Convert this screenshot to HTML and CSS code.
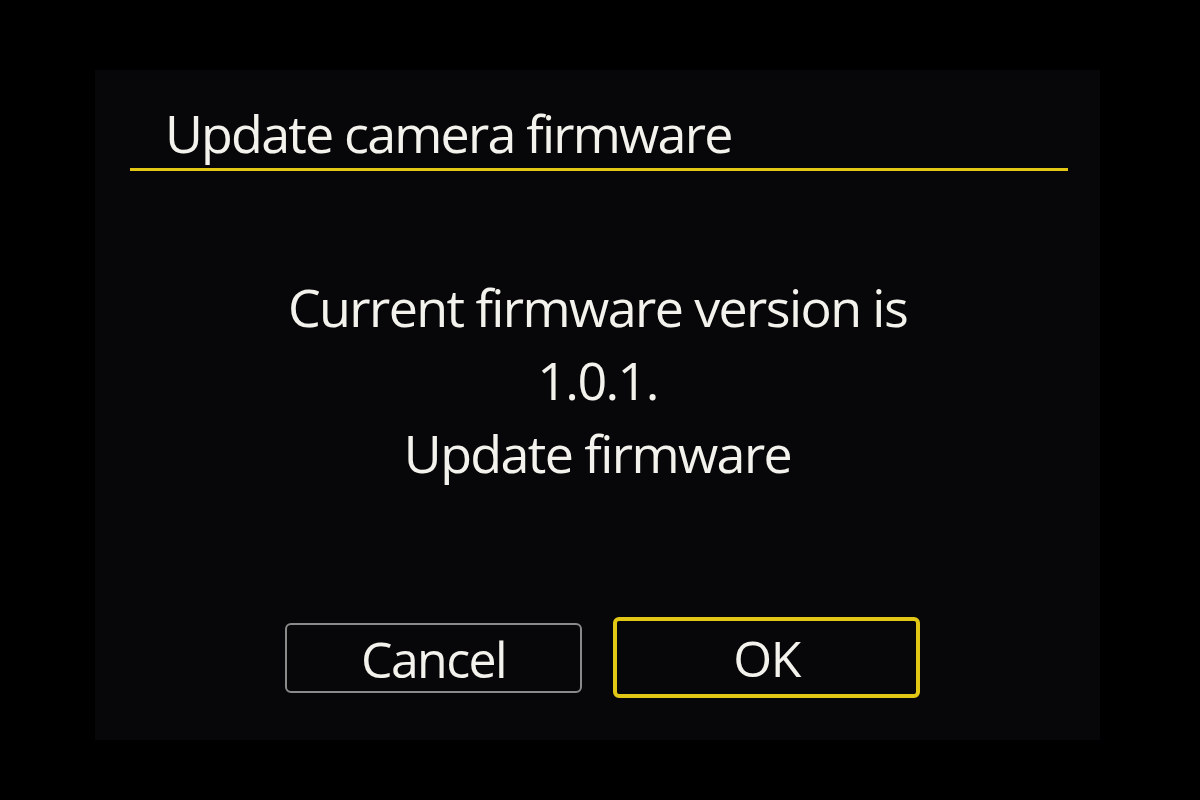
FILE: index.html
```html
<!DOCTYPE html>
<html lang="en">
<head>
    <meta charset="UTF-8">
    <meta name="viewport" content="width=device-width, initial-scale=1.0">
    <title>Update camera firmware</title>
    <link rel="stylesheet" href="styles.css">
</head>
<body>
    <div class="pantalla">
        <div class="cabecera">
            <h1>Update camera firmware</h1>
        </div>

        <div class="mensaje">
            <p>Current firmware version is</p>
            <p>1.0.1.</p>
            <p>Update firmware</p>
        </div>

        <div class="botones">
            <button class="boton boton-cancelar">Cancel</button>
            <button class="boton boton-ok">OK</button>
        </div>
    </div>
</body>
</html>
```

FILE: styles.css
```css
body {
    margin: 0;
    background-color: #000;
    color: #f4f2ec;
    font-family: "Open Sans", "DejaVu Sans", sans-serif;
    padding: 70px 0 0 95px;
}
.pantalla {
    width: 1005px;
    height: 670px;
    background-color: #070709;
    box-sizing: border-box;
    padding-top: 32px;
}
.cabecera {
    margin-left: 35px;
    width: 938px;
    padding-left: 35px;
    padding-bottom: 4px;
    box-sizing: border-box;
    border-bottom: 3px solid #e2c814;
}
.cabecera h1 {
    margin: 0;
    font-size: 52px;
    font-weight: 400;
    line-height: 62px;
    letter-spacing: -1.8px;
}
.mensaje {
    margin-top: 99px;
    text-align: center;
}
.mensaje p {
    margin: 0;
    font-size: 52px;
    line-height: 73px;
    letter-spacing: -1.6px;
}
.botones {
    display: flex;
    align-items: center;
    gap: 31px;
    margin-top: 128px;
    padding-left: 190px;
}
.boton {
    background: transparent;
    color: #f4f2ec;
    font-family: "Open Sans", "DejaVu Sans", sans-serif;
    font-size: 50px;
    letter-spacing: -1.6px;
    padding: 0;
    border-radius: 6px;
    cursor: pointer;
}
.boton-cancelar {
    width: 297px;
    height: 70px;
    border: 2px solid #8a8a8a;
}
.boton-ok {
    width: 307px;
    height: 81px;
    border: 4px solid #e2c814;
}
```
